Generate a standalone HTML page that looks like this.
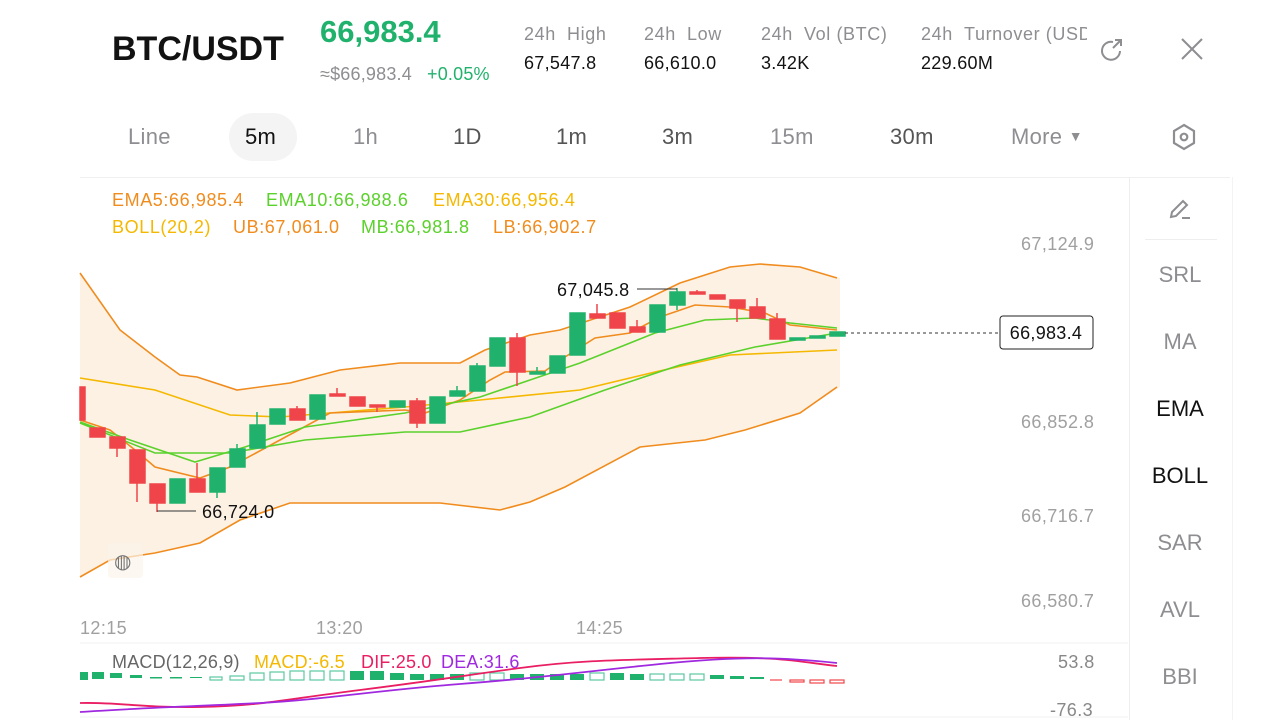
<!DOCTYPE html>
<html><head><meta charset="utf-8"><style>
body{margin:0;width:1280px;height:720px;background:#fff;font-family:"Liberation Sans",sans-serif;position:relative;overflow:hidden;color:#121212}
.a{position:absolute;white-space:nowrap}
.g{color:#8e8e92}
.tf{position:absolute;top:122px;font-size:22px;color:#8e8e92;line-height:30px;letter-spacing:.3px}
.side{position:absolute;left:1129px;top:177px;width:102px;height:543px;border-left:1px solid #eeeeee;border-right:1px solid #f3f3f3}
.side div{position:absolute;width:100px;text-align:center;font-size:22px;color:#8e8e92}
.ax{position:absolute;font-size:18px;color:#a0a0a0;letter-spacing:.4px}
.ind{position:absolute;font-size:18px;letter-spacing:.6px;white-space:nowrap}
</style></head><body>
<div class="a" style="left:112px;top:30px;font-size:34px;font-weight:bold">BTC/USDT</div>
<div class="a" style="left:320px;top:14px;font-size:31px;font-weight:bold;color:#20b26c">66,983.4</div>
<div class="a g" style="left:320px;top:64px;font-size:18px;letter-spacing:.2px">≈$66,983.4</div>
<div class="a" style="left:427px;top:64px;font-size:18px;color:#20b26c;letter-spacing:.2px">+0.05%</div>
<div class="a g" style="left:524px;top:24px;font-size:18px;letter-spacing:.6px">24h&nbsp;&nbsp;High</div>
<div class="a" style="left:524px;top:53px;font-size:18px;letter-spacing:.3px">67,547.8</div>
<div class="a g" style="left:644px;top:24px;font-size:18px;letter-spacing:.6px">24h&nbsp;&nbsp;Low</div>
<div class="a" style="left:644px;top:53px;font-size:18px;letter-spacing:.3px">66,610.0</div>
<div class="a g" style="left:761px;top:24px;font-size:18px;letter-spacing:.6px">24h&nbsp;&nbsp;Vol (BTC)</div>
<div class="a" style="left:761px;top:53px;font-size:18px;letter-spacing:.3px">3.42K</div>
<div class="a g" style="left:921px;top:24px;font-size:18px;width:166px;overflow:hidden;letter-spacing:.6px">24h&nbsp;&nbsp;Turnover (USDT)</div>
<div class="a" style="left:921px;top:53px;font-size:18px;letter-spacing:.3px">229.60M</div>
<svg class="a" style="left:1098px;top:36px" width="28" height="28" viewBox="0 0 28 28" fill="none" stroke="#8e8e92" stroke-width="2"><path d="M22 15a9 9 0 1 1-7-9"/><path d="M17 4h6v6M23 4l-8 8"/></svg>
<svg class="a" style="left:1180px;top:37px" width="24" height="24" viewBox="0 0 24 24" stroke="#8e8e92" stroke-width="2"><path d="M2 2l20 20M22 2L2 22"/></svg>
<div style="position:absolute;left:229px;top:113px;width:68px;height:48px;border-radius:24px;background:#f4f4f4"></div>
<div class="tf" style="left:128px">Line</div>
<div class="tf" style="left:245px;color:#121212">5m</div>
<div class="tf" style="left:353px">1h</div>
<div class="tf" style="left:453px;color:#555">1D</div>
<div class="tf" style="left:556px;color:#555">1m</div>
<div class="tf" style="left:662px;color:#555">3m</div>
<div class="tf" style="left:770px">15m</div>
<div class="tf" style="left:890px;color:#555">30m</div>
<div class="tf" style="left:1011px">More <span style="font-size:14px;position:relative;top:-3px">▼</span></div>
<svg class="a" style="left:1170px;top:122px" width="28" height="30" viewBox="0 0 28 30" fill="none" stroke="#8e8e92" stroke-width="2.2"><path d="M14 3l10 6v12l-10 6-10-6V9z"/><circle cx="14" cy="15" r="3.3"/></svg>
<div style="position:absolute;left:80px;top:177px;width:1150px;height:1px;background:#f0f0f0"></div>
<div class="side">
<svg style="position:absolute;left:38px;top:20px" width="26" height="24" viewBox="0 0 26 24" fill="none" stroke="#8e8e92" stroke-width="2"><path d="M3 20l1-5L15 4l4 4L8 19z"/><path d="M14 21h8"/></svg>
<div style="top:62px;left:15px;width:72px;height:1px;background:#eee"></div>
<div style="top:85px">SRL</div><div style="top:152px">MA</div><div style="top:219px;color:#121212">EMA</div><div style="top:286px;color:#121212">BOLL</div><div style="top:353px">SAR</div><div style="top:420px">AVL</div><div style="top:487px">BBI</div>
</div>
<div class="ind" style="left:112px;top:190px;color:#f08c1e">EMA5:66,985.4</div>
<div class="ind" style="left:266px;top:190px;color:#5bd12c">EMA10:66,988.6</div>
<div class="ind" style="left:433px;top:190px;color:#f5b800">EMA30:66,956.4</div>
<div class="ind" style="left:112px;top:217px;color:#f5b800">BOLL(20,2)</div>
<div class="ind" style="left:233px;top:217px;color:#f08c1e">UB:67,061.0</div>
<div class="ind" style="left:361px;top:217px;color:#5bd12c">MB:66,981.8</div>
<div class="ind" style="left:493px;top:217px;color:#f08c1e">LB:66,902.7</div>
<div class="ax" style="left:1021px;top:234px">67,124.9</div>
<div class="ax" style="left:1021px;top:412px">66,852.8</div>
<div class="ax" style="left:1021px;top:506px">66,716.7</div>
<div class="ax" style="left:1021px;top:591px">66,580.7</div>
<div class="ax" style="left:80px;top:618px">12:15</div>
<div class="ax" style="left:316px;top:618px">13:20</div>
<div class="ax" style="left:576px;top:618px">14:25</div>
<div class="ax" style="left:1058px;top:652px;color:#888">53.8</div>
<div class="ax" style="left:1050px;top:700px;color:#888">-76.3</div>
<svg class="a" style="left:0;top:0" width="1280" height="720">
<path d="M80 273L120 330L155 357L180 375L197 377L237 390L290 383L340 370L400 363L460 363L485 350L530 335L560 330L630 307L680 283L730 267L760 264L800 267L840 278L840 387L800 413L745 430L705 440L640 447L565 487L530 502L500 510L440 503L290 503L240 520L200 543L155 553L110 560L80 577Z" fill="#fdf1e4"/>
<g fill="none" stroke-width="1.6">
<path d="M80 273L120 330L155 357L180 375L197 377L237 390L290 383L340 370L400 363L460 363L485 350L530 335L560 330L630 307L680 283L730 267L760 264L800 267L837 278" stroke="#f08c1e"/>
<path d="M80 577L110 560L155 553L200 543L240 520L290 503L440 503L500 510L530 502L565 487L640 447L705 440L745 430L800 413L837 387" stroke="#f08c1e"/>
<path d="M80 378L155 390L230 415L280 417L405 407L480 400L580 390L655 372L730 355L837 350" stroke="#f5b800"/>
<path d="M80 420L110 430L135 450L155 467L200 478L230 467L280 440L330 413L405 410L425 413L460 400L490 380L505 372L545 371L565 357L595 338L630 333L660 317L695 305L730 307L765 313L790 325L837 330" stroke="#f08c1e"/>
<path d="M80 422L130 440L195 462L245 447L305 427L405 413L480 397L530 380L580 363L655 333L705 320L755 318L790 323L837 328" stroke="#5bd12c"/>
<path d="M80 423L155 453L230 453L305 440L405 432L460 432L530 417L605 390L680 365L755 347L837 333" stroke="#5bd12c"/>
</g>
<g fill="#ef454a" stroke="#ef454a" stroke-width="1.5">
<rect x="80" y="387" width="5" height="33"/>
<rect x="90" y="428" width="15" height="9"/>
<line x1="117" y1="437" x2="117" y2="457"/><rect x="110" y="437" width="15" height="11"/>
<line x1="137" y1="450" x2="137" y2="502"/><rect x="130" y="450" width="15" height="33"/>
<line x1="157" y1="484" x2="157" y2="512"/><rect x="150" y="484" width="15" height="19"/>
<line x1="197" y1="463" x2="197" y2="492"/><rect x="190" y="479" width="15" height="13"/>
<line x1="297" y1="406" x2="297" y2="420"/><rect x="290" y="409" width="15" height="11"/>
<line x1="337" y1="388" x2="337" y2="396"/><rect x="330" y="394" width="15" height="2"/>
<rect x="350" y="397" width="15" height="9"/>
<line x1="377" y1="406" x2="377" y2="412"/><rect x="370" y="405" width="15" height="2"/>
<line x1="417" y1="398" x2="417" y2="428"/><rect x="410" y="401" width="15" height="22"/>
<line x1="517" y1="333" x2="517" y2="386"/><rect x="510" y="338" width="15" height="34"/>
<line x1="597" y1="304" x2="597" y2="318"/><rect x="590" y="314" width="15" height="4"/>
<rect x="610" y="313" width="15" height="15"/>
<line x1="637" y1="320" x2="637" y2="332"/><rect x="630" y="327" width="15" height="5"/>
<line x1="697" y1="290" x2="697" y2="294"/><rect x="690" y="292" width="15" height="2"/>
<rect x="710" y="295" width="15" height="4"/>
<line x1="737" y1="300" x2="737" y2="322"/><rect x="730" y="300" width="15" height="8"/>
<line x1="757" y1="298" x2="757" y2="318"/><rect x="750" y="307" width="15" height="11"/>
<line x1="777" y1="313" x2="777" y2="339"/><rect x="770" y="319" width="15" height="20"/>
</g>
<g fill="#20b26c" stroke="#20b26c" stroke-width="1.5">
<rect x="170" y="479" width="15" height="24"/>
<line x1="217" y1="468" x2="217" y2="498"/><rect x="210" y="468" width="15" height="24"/>
<line x1="237" y1="444" x2="237" y2="467"/><rect x="230" y="449" width="15" height="18"/>
<line x1="257" y1="412" x2="257" y2="448"/><rect x="250" y="425" width="15" height="23"/>
<rect x="270" y="409" width="15" height="15"/>
<rect x="310" y="395" width="15" height="24"/>
<rect x="390" y="401" width="15" height="6"/>
<rect x="430" y="397" width="15" height="26"/>
<line x1="457" y1="386" x2="457" y2="396"/><rect x="450" y="391" width="15" height="5"/>
<line x1="477" y1="363" x2="477" y2="391"/><rect x="470" y="366" width="15" height="25"/>
<rect x="490" y="338" width="15" height="28"/>
<line x1="537" y1="367" x2="537" y2="374"/><rect x="530" y="372" width="15" height="2"/>
<rect x="550" y="356" width="15" height="17"/>
<rect x="570" y="313" width="15" height="42"/>
<rect x="650" y="305" width="15" height="27"/>
<line x1="677" y1="288" x2="677" y2="310"/><rect x="670" y="292" width="15" height="13"/>
<rect x="790" y="338" width="15" height="2"/>
<rect x="810" y="336" width="15" height="2"/>
<rect x="830" y="332" width="15" height="4"/>
</g>
<line x1="845" y1="333" x2="1000" y2="333" stroke="#333" stroke-dasharray="3 3"/>
<rect x="1000" y="316" width="93" height="33" rx="3" fill="#fff" stroke="#222"/>
<text x="1046" y="339" font-size="18" text-anchor="middle" fill="#121212" font-family="Liberation Sans" letter-spacing=".3">66,983.4</text>
<line x1="637" y1="289" x2="677" y2="289" stroke="#333"/>
<text x="557" y="296" font-size="18" fill="#121212" font-family="Liberation Sans" letter-spacing=".3">67,045.8</text>
<line x1="157" y1="511" x2="196" y2="511" stroke="#333"/>
<text x="202" y="518" font-size="18" fill="#121212" font-family="Liberation Sans" letter-spacing=".3">66,724.0</text>
<rect x="108" y="543" width="35" height="35" rx="4" fill="#fbf3ea" opacity=".7"/>
<text x="114" y="568" font-size="20" fill="#777" font-family="DejaVu Sans">◍</text>
<line x1="80" y1="643" x2="1128" y2="643" stroke="#f0f0f0"/>
<line x1="80" y1="717" x2="1128" y2="717" stroke="#f0f0f0"/>
<g fill="#20b26c">
<rect x="80" y="672" width="8" height="8"/><rect x="92" y="672" width="12" height="7"/><rect x="110" y="673" width="12" height="5"/><rect x="130" y="675" width="12" height="3"/>
<rect x="150" y="677" width="12" height="1.5"/><rect x="170" y="677" width="12" height="1.5"/><rect x="190" y="677" width="12" height="1"/>
<rect x="350" y="671" width="14" height="9"/><rect x="370" y="671" width="14" height="9"/><rect x="390" y="673" width="14" height="7"/><rect x="410" y="674" width="14" height="6"/><rect x="430" y="674" width="14" height="6"/><rect x="450" y="674" width="14" height="6"/>
<rect x="510" y="674" width="14" height="6"/><rect x="530" y="674" width="14" height="6"/><rect x="550" y="674" width="14" height="6"/><rect x="570" y="674" width="14" height="6"/>
<rect x="610" y="673" width="14" height="7"/><rect x="630" y="674" width="14" height="6"/><rect x="710" y="675" width="14" height="4"/><rect x="730" y="676" width="14" height="3"/><rect x="750" y="677" width="14" height="2"/>
</g>
<g fill="none" stroke="#5ac8a0" stroke-width="1.2">
<rect x="210" y="677" width="12" height="3"/><rect x="230" y="676" width="14" height="4"/><rect x="250" y="673" width="14" height="7"/><rect x="270" y="672" width="14" height="8"/><rect x="290" y="671" width="14" height="9"/><rect x="310" y="671" width="14" height="9"/><rect x="330" y="671" width="14" height="9"/>
<rect x="470" y="673" width="14" height="7"/><rect x="490" y="673" width="14" height="7"/><rect x="590" y="673" width="14" height="7"/><rect x="650" y="674" width="14" height="6"/><rect x="670" y="674" width="14" height="6"/><rect x="690" y="674" width="14" height="6"/>
</g>
<g fill="none" stroke="#ef454a" stroke-width="1.2"><line x1="770" y1="680" x2="782" y2="680"/><rect x="790" y="680" width="14" height="2"/><rect x="810" y="680" width="14" height="3"/><rect x="830" y="680" width="14" height="3"/></g>
<path d="M80 703C120 702 140 708 200 707S280 700 360 690S460 676 520 668S620 660 700 658S800 662 837 666" fill="none" stroke="#e91e63" stroke-width="1.8"/>
<path d="M80 712C140 708 200 706 260 703S380 690 460 684S580 672 660 664S780 657 837 663" fill="none" stroke="#a029e0" stroke-width="1.8"/>
</svg>
<div class="ind" style="left:112px;top:652px;color:#666;font-size:18px;letter-spacing:.2px">MACD(12,26,9)</div>
<div class="ind" style="left:254px;top:652px;color:#f5b800;letter-spacing:.2px">MACD:-6.5</div>
<div class="ind" style="left:361px;top:652px;color:#e91e63;letter-spacing:.2px">DIF:25.0</div>
<div class="ind" style="left:441px;top:652px;color:#a029e0;letter-spacing:.2px">DEA:31.6</div>
</body></html>
